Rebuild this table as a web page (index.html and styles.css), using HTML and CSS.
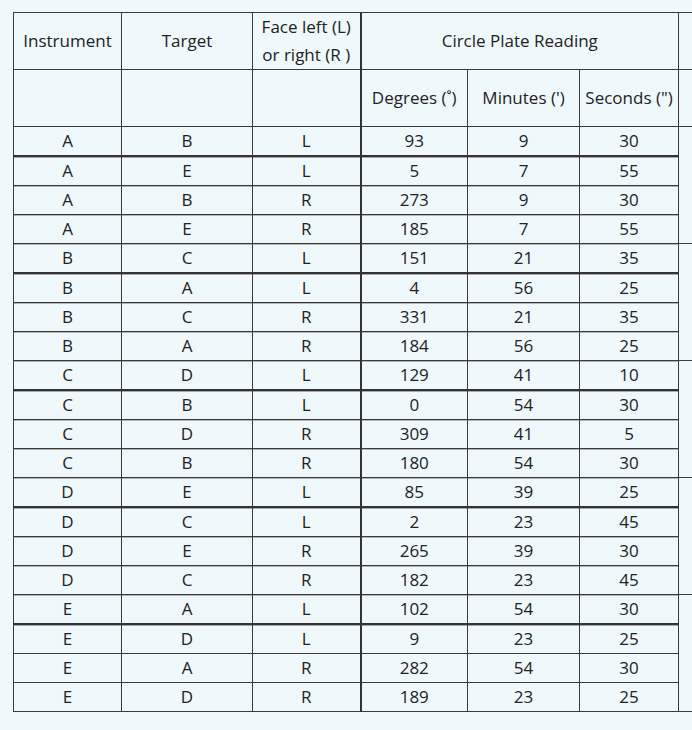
FILE: index.html
```html
<!DOCTYPE html>
<html>
<head>
<meta charset="utf-8">
<link rel="stylesheet" href="styles.css">
</head>
<body>
<div class="wrap">
<table class="readings">
<colgroup>
<col class="c-inst"><col class="c-target"><col class="c-face"><col class="c-deg"><col class="c-min"><col class="c-sec"><col class="c-extra">
</colgroup>
<thead>
<tr class="h1">
<th>Instrument</th><th>Target</th><th class="face">Face left (L)<br>or right (R )</th><th class="plate" colspan="3">Circle Plate Reading</th><th class="extra"></th>
</tr>
<tr class="h2">
<th></th><th></th><th class="face"></th><th class="deg">Degrees (˚)</th><th>Minutes (')</th><th>Seconds (")</th><th class="extra"></th>
</tr>
</thead>
<tbody>
<tr class="first"><td>A</td><td>B</td><td class="face">L</td><td>93</td><td>9</td><td>30</td><td class="extra" rowspan="4"></td></tr>
<tr class="thick"><td>A</td><td>E</td><td class="face">L</td><td>5</td><td>7</td><td>55</td></tr>
<tr class="soft"><td>A</td><td>B</td><td class="face">R</td><td>273</td><td>9</td><td>30</td></tr>
<tr class="soft"><td>A</td><td>E</td><td class="face">R</td><td>185</td><td>7</td><td>55</td></tr>
<tr class="soft"><td>B</td><td>C</td><td class="face">L</td><td>151</td><td>21</td><td>35</td><td class="extra" rowspan="4"></td></tr>
<tr class="thick"><td>B</td><td>A</td><td class="face">L</td><td>4</td><td>56</td><td>25</td></tr>
<tr class="soft"><td>B</td><td>C</td><td class="face">R</td><td>331</td><td>21</td><td>35</td></tr>
<tr class="soft"><td>B</td><td>A</td><td class="face">R</td><td>184</td><td>56</td><td>25</td></tr>
<tr class="soft"><td>C</td><td>D</td><td class="face">L</td><td>129</td><td>41</td><td>10</td><td class="extra" rowspan="4"></td></tr>
<tr class="thick"><td>C</td><td>B</td><td class="face">L</td><td>0</td><td>54</td><td>30</td></tr>
<tr class="soft"><td>C</td><td>D</td><td class="face">R</td><td>309</td><td>41</td><td>5</td></tr>
<tr class="soft"><td>C</td><td>B</td><td class="face">R</td><td>180</td><td>54</td><td>30</td></tr>
<tr class="soft"><td>D</td><td>E</td><td class="face">L</td><td>85</td><td>39</td><td>25</td><td class="extra" rowspan="4"></td></tr>
<tr class="thick"><td>D</td><td>C</td><td class="face">L</td><td>2</td><td>23</td><td>45</td></tr>
<tr class="soft"><td>D</td><td>E</td><td class="face">R</td><td>265</td><td>39</td><td>30</td></tr>
<tr class="soft"><td>D</td><td>C</td><td class="face">R</td><td>182</td><td>23</td><td>45</td></tr>
<tr class="soft"><td>E</td><td>A</td><td class="face">L</td><td>102</td><td>54</td><td>30</td><td class="extra" rowspan="4"></td></tr>
<tr class="thick"><td>E</td><td>D</td><td class="face">L</td><td>9</td><td>23</td><td>25</td></tr>
<tr class="plain"><td>E</td><td>A</td><td class="face">R</td><td>282</td><td>54</td><td>30</td></tr>
<tr class="plain"><td>E</td><td>D</td><td class="face">R</td><td>189</td><td>23</td><td>25</td></tr>
</tbody>
</table>
</div>
</body>
</html>
```

FILE: styles.css
```css
html, body {
  margin: 0;
  padding: 0;
  background: #eff8fb;
}
body {
  font-family: "Open Sans", "Noto Sans", "Liberation Sans", sans-serif;
  color: #222;
}
.wrap {
  width: 692px;
  height: 730px;
  overflow: hidden;
  padding: 12px 0 0 13px;
  box-sizing: border-box;
}
.readings {
  border-collapse: collapse;
  table-layout: fixed;
  width: 725px;
  font-size: 17px;
}
.c-inst { width: 108px; }
.c-target { width: 131px; }
.c-face { width: 108px; }
.c-deg { width: 107px; }
.c-min { width: 112px; }
.c-sec { width: 99px; }
.c-extra { width: 60px; }
.readings th,
.readings td {
  border: 1px solid #3a3a3a;
  text-align: center;
  padding: 0 1px;
  font-weight: normal;
  white-space: nowrap;
}
.readings th {
  height: 56px;
  line-height: 28px;
}
.readings td {
  height: 28px;
  line-height: 28px;
}
.readings .face {
  border-right: 2px solid #333;
}
.readings .deg {
  border-left: 2px solid #333;
}
.readings .plate {
  border-left: 2px solid #333;
}
.readings tr.thick td {
  border-top: 2px solid #333;
  box-shadow: inset 0 1px 0 #a8a8a8;
}
.readings tr.soft td {
  border-top: 1px solid #6a6a6a;
  box-shadow: inset 0 1px 0 #b4b4b4;
}
.readings tr.soft td.extra,
.readings tr.first td.extra {
  border-top: 1px solid #8a8a8a;
  box-shadow: none;
}
.readings tr.first td {
  border-top: 1px solid #3a3a3a;
}
```
